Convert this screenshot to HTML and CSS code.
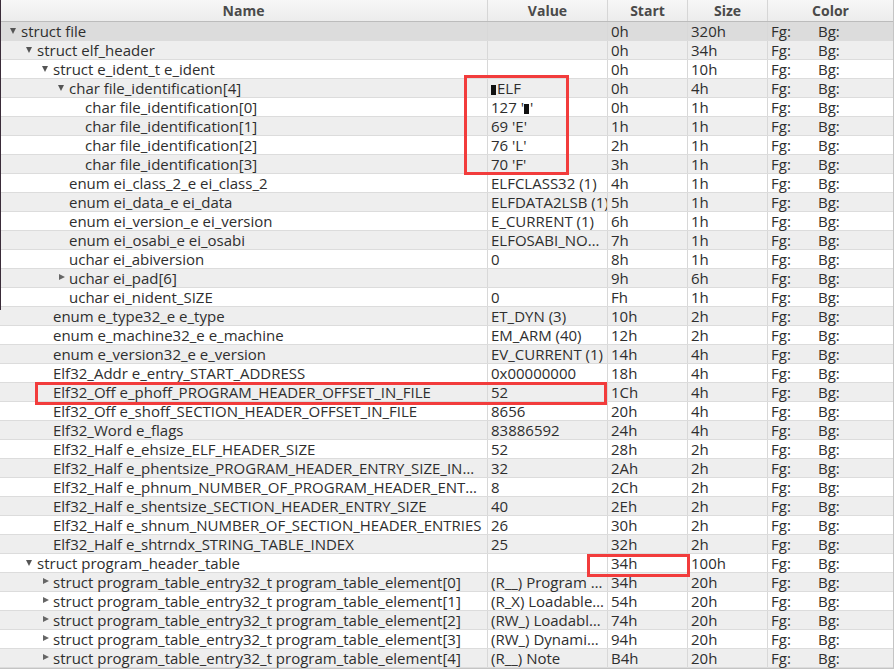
FILE: index.html
```html
<!DOCTYPE html>
<html>
<head>
<meta charset="utf-8">
<link rel="stylesheet" href="styles.css">
</head>
<body>
<div class="tree">
  <div class="head">
    <div class="h">Name</div>
    <div class="h">Value</div>
    <div class="h">Start</div>
    <div class="h">Size</div>
    <div class="h">Color</div>
  </div>

  <div class="row sel"><div class="c name d0"><span class="tw open"></span>struct file</div><div class="c val"></div><div class="c num">0h</div><div class="c num">320h</div><div class="c col"><span class="fg">Fg:</span><span>Bg:</span></div></div>
  <div class="row alt"><div class="c name d1"><span class="tw open"></span>struct elf_header</div><div class="c val"></div><div class="c num">0h</div><div class="c num">34h</div><div class="c col"><span class="fg">Fg:</span><span>Bg:</span></div></div>
  <div class="row"><div class="c name d2"><span class="tw open"></span>struct e_ident_t e_ident</div><div class="c val"></div><div class="c num">0h</div><div class="c num">10h</div><div class="c col"><span class="fg">Fg:</span><span>Bg:</span></div></div>
  <div class="row alt"><div class="c name d3"><span class="tw open"></span>char file_identification[4]</div><div class="c val"><span class="blk"></span>ELF</div><div class="c num">0h</div><div class="c num">4h</div><div class="c col"><span class="fg">Fg:</span><span>Bg:</span></div></div>
  <div class="row"><div class="c name d4"><span class="tw"></span>char file_identification[0]</div><div class="c val">127 '<span class="blk"></span>'</div><div class="c num">0h</div><div class="c num">1h</div><div class="c col"><span class="fg">Fg:</span><span>Bg:</span></div></div>
  <div class="row alt"><div class="c name d4"><span class="tw"></span>char file_identification[1]</div><div class="c val">69 'E'</div><div class="c num">1h</div><div class="c num">1h</div><div class="c col"><span class="fg">Fg:</span><span>Bg:</span></div></div>
  <div class="row"><div class="c name d4"><span class="tw"></span>char file_identification[2]</div><div class="c val">76 'L'</div><div class="c num">2h</div><div class="c num">1h</div><div class="c col"><span class="fg">Fg:</span><span>Bg:</span></div></div>
  <div class="row alt"><div class="c name d4"><span class="tw"></span>char file_identification[3]</div><div class="c val">70 'F'</div><div class="c num">3h</div><div class="c num">1h</div><div class="c col"><span class="fg">Fg:</span><span>Bg:</span></div></div>
  <div class="row"><div class="c name d3"><span class="tw"></span>enum ei_class_2_e ei_class_2</div><div class="c val">ELFCLASS32 (1)</div><div class="c num">4h</div><div class="c num">1h</div><div class="c col"><span class="fg">Fg:</span><span>Bg:</span></div></div>
  <div class="row alt"><div class="c name d3"><span class="tw"></span>enum ei_data_e ei_data</div><div class="c val">ELFDATA2LSB (1)</div><div class="c num">5h</div><div class="c num">1h</div><div class="c col"><span class="fg">Fg:</span><span>Bg:</span></div></div>
  <div class="row"><div class="c name d3"><span class="tw"></span>enum ei_version_e ei_version</div><div class="c val">E_CURRENT (1)</div><div class="c num">6h</div><div class="c num">1h</div><div class="c col"><span class="fg">Fg:</span><span>Bg:</span></div></div>
  <div class="row alt"><div class="c name d3"><span class="tw"></span>enum ei_osabi_e ei_osabi</div><div class="c val">ELFOSABI_NO…</div><div class="c num">7h</div><div class="c num">1h</div><div class="c col"><span class="fg">Fg:</span><span>Bg:</span></div></div>
  <div class="row"><div class="c name d3"><span class="tw"></span>uchar ei_abiversion</div><div class="c val">0</div><div class="c num">8h</div><div class="c num">1h</div><div class="c col"><span class="fg">Fg:</span><span>Bg:</span></div></div>
  <div class="row alt"><div class="c name d3"><span class="tw closed"></span>uchar ei_pad[6]</div><div class="c val"></div><div class="c num">9h</div><div class="c num">6h</div><div class="c col"><span class="fg">Fg:</span><span>Bg:</span></div></div>
  <div class="row"><div class="c name d3"><span class="tw"></span>uchar ei_nident_SIZE</div><div class="c val">0</div><div class="c num">Fh</div><div class="c num">1h</div><div class="c col"><span class="fg">Fg:</span><span>Bg:</span></div></div>
  <div class="row alt"><div class="c name d2"><span class="tw"></span>enum e_type32_e e_type</div><div class="c val">ET_DYN (3)</div><div class="c num">10h</div><div class="c num">2h</div><div class="c col"><span class="fg">Fg:</span><span>Bg:</span></div></div>
  <div class="row"><div class="c name d2"><span class="tw"></span>enum e_machine32_e e_machine</div><div class="c val">EM_ARM (40)</div><div class="c num">12h</div><div class="c num">2h</div><div class="c col"><span class="fg">Fg:</span><span>Bg:</span></div></div>
  <div class="row alt"><div class="c name d2"><span class="tw"></span>enum e_version32_e e_version</div><div class="c val">EV_CURRENT (1)</div><div class="c num">14h</div><div class="c num">4h</div><div class="c col"><span class="fg">Fg:</span><span>Bg:</span></div></div>
  <div class="row"><div class="c name d2"><span class="tw"></span>Elf32_Addr e_entry_START_ADDRESS</div><div class="c val">0x00000000</div><div class="c num">18h</div><div class="c num">4h</div><div class="c col"><span class="fg">Fg:</span><span>Bg:</span></div></div>
  <div class="row alt"><div class="c name d2"><span class="tw"></span>Elf32_Off e_phoff_PROGRAM_HEADER_OFFSET_IN_FILE</div><div class="c val">52</div><div class="c num">1Ch</div><div class="c num">4h</div><div class="c col"><span class="fg">Fg:</span><span>Bg:</span></div></div>
  <div class="row"><div class="c name d2"><span class="tw"></span>Elf32_Off e_shoff_SECTION_HEADER_OFFSET_IN_FILE</div><div class="c val">8656</div><div class="c num">20h</div><div class="c num">4h</div><div class="c col"><span class="fg">Fg:</span><span>Bg:</span></div></div>
  <div class="row alt"><div class="c name d2"><span class="tw"></span>Elf32_Word e_flags</div><div class="c val">83886592</div><div class="c num">24h</div><div class="c num">4h</div><div class="c col"><span class="fg">Fg:</span><span>Bg:</span></div></div>
  <div class="row"><div class="c name d2"><span class="tw"></span>Elf32_Half e_ehsize_ELF_HEADER_SIZE</div><div class="c val">52</div><div class="c num">28h</div><div class="c num">2h</div><div class="c col"><span class="fg">Fg:</span><span>Bg:</span></div></div>
  <div class="row alt"><div class="c name d2"><span class="tw"></span>Elf32_Half e_phentsize_PROGRAM_HEADER_ENTRY_SIZE_IN…</div><div class="c val">32</div><div class="c num">2Ah</div><div class="c num">2h</div><div class="c col"><span class="fg">Fg:</span><span>Bg:</span></div></div>
  <div class="row"><div class="c name d2"><span class="tw"></span>Elf32_Half e_phnum_NUMBER_OF_PROGRAM_HEADER_ENT…</div><div class="c val">8</div><div class="c num">2Ch</div><div class="c num">2h</div><div class="c col"><span class="fg">Fg:</span><span>Bg:</span></div></div>
  <div class="row alt"><div class="c name d2"><span class="tw"></span>Elf32_Half e_shentsize_SECTION_HEADER_ENTRY_SIZE</div><div class="c val">40</div><div class="c num">2Eh</div><div class="c num">2h</div><div class="c col"><span class="fg">Fg:</span><span>Bg:</span></div></div>
  <div class="row"><div class="c name d2"><span class="tw"></span>Elf32_Half e_shnum_NUMBER_OF_SECTION_HEADER_ENTRIES</div><div class="c val">26</div><div class="c num">30h</div><div class="c num">2h</div><div class="c col"><span class="fg">Fg:</span><span>Bg:</span></div></div>
  <div class="row alt"><div class="c name d2"><span class="tw"></span>Elf32_Half e_shtrndx_STRING_TABLE_INDEX</div><div class="c val">25</div><div class="c num">32h</div><div class="c num">2h</div><div class="c col"><span class="fg">Fg:</span><span>Bg:</span></div></div>
  <div class="row"><div class="c name d1"><span class="tw open"></span>struct program_header_table</div><div class="c val"></div><div class="c num">34h</div><div class="c num">100h</div><div class="c col"><span class="fg">Fg:</span><span>Bg:</span></div></div>
  <div class="row alt"><div class="c name d2"><span class="tw closed"></span>struct program_table_entry32_t program_table_element[0]</div><div class="c val">(R__) Program …</div><div class="c num">34h</div><div class="c num">20h</div><div class="c col"><span class="fg">Fg:</span><span>Bg:</span></div></div>
  <div class="row"><div class="c name d2"><span class="tw closed"></span>struct program_table_entry32_t program_table_element[1]</div><div class="c val">(R_X) Loadable…</div><div class="c num">54h</div><div class="c num">20h</div><div class="c col"><span class="fg">Fg:</span><span>Bg:</span></div></div>
  <div class="row alt"><div class="c name d2"><span class="tw closed"></span>struct program_table_entry32_t program_table_element[2]</div><div class="c val">(RW_) Loadabl…</div><div class="c num">74h</div><div class="c num">20h</div><div class="c col"><span class="fg">Fg:</span><span>Bg:</span></div></div>
  <div class="row"><div class="c name d2"><span class="tw closed"></span>struct program_table_entry32_t program_table_element[3]</div><div class="c val">(RW_) Dynami…</div><div class="c num">94h</div><div class="c num">20h</div><div class="c col"><span class="fg">Fg:</span><span>Bg:</span></div></div>
  <div class="row alt"><div class="c name d2"><span class="tw closed"></span>struct program_table_entry32_t program_table_element[4]</div><div class="c val">(R__) Note</div><div class="c num">B4h</div><div class="c num">20h</div><div class="c col"><span class="fg">Fg:</span><span>Bg:</span></div></div>

  <div class="edge"></div>
  <div class="mark m1"></div>
  <div class="mark m2"></div>
  <div class="mark m3"></div>
</div>
</body>
</html>
```
FILE: styles.css
```css
html, body {
  margin: 0;
  padding: 0;
  background: #ffffff;
}
.tree {
  position: relative;
  width: 894px;
  height: 669px;
  box-sizing: border-box;
  border-right: 1px solid #c4c4c4;
  border-bottom: 1px solid #c4c4c4;
  overflow: hidden;
  font-family: "Open Sans", "Noto Sans", sans-serif;
  font-size: 15px;
  color: #2e2e2e;
}
.head, .row {
  display: grid;
  grid-template-columns: 488px 120px 80px 80px 1fr;
}
.head {
  height: 22px;
  box-sizing: border-box;
  border-bottom: 1px solid #bcbcbc;
  background: linear-gradient(#f7f7f7, #ececec);
}
.h {
  border-right: 1px solid #d6d6d6;
  text-align: center;
  font-weight: bold;
  font-size: 14px;
  color: #4a4a4a;
  line-height: 21px;
}
.h:last-child { border-right: none; }
.row {
  height: 19px;
  box-sizing: border-box;
  border-bottom: 1px solid #dcdcdc;
  background: #ffffff;
}
.row.alt { background: #eeeeee; }
.row.sel { background: #dcdcdc; }
.c {
  border-right: 1px solid #d8d8d8;
  height: 18px;
  line-height: 19px;
  white-space: nowrap;
  overflow-x: clip;
  overflow-y: visible;
  padding-left: 3px;
}
.c:last-child { border-right: none; }
.name { display: flex; }
.d0 { padding-left: 5px; }
.d1 { padding-left: 21px; }
.d2 { padding-left: 37px; }
.d3 { padding-left: 53px; }
.d4 { padding-left: 69px; }
.tw {
  flex: none;
  width: 16px;
  height: 18px;
  position: relative;
}
.tw.open::before {
  content: "";
  position: absolute;
  left: 5px;
  top: 6px;
  border-left: 3.5px solid transparent;
  border-right: 3.5px solid transparent;
  border-top: 6px solid #555555;
}
.tw.closed::before {
  content: "";
  position: absolute;
  left: 6px;
  top: 5px;
  border-top: 3.5px solid transparent;
  border-bottom: 3.5px solid transparent;
  border-left: 6px solid #666666;
}
.col .fg {
  display: inline-block;
  width: 47px;
}
.blk {
  display: inline-block;
  width: 5px;
  height: 10px;
  background: #111111;
  margin: 0 1px 0 0;
  vertical-align: -1px;
}
.edge {
  position: absolute;
  left: 0;
  top: 0;
  width: 1px;
  height: 310px;
  background: #3a2c39;
}
.mark {
  position: absolute;
  border: 3px solid #f23c3c;
  box-sizing: border-box;
}
.m1 { left: 464px; top: 75px; width: 105px; height: 100px; }
.m2 { left: 35px; top: 382px; width: 572px; height: 23px; }
.m3 { left: 587px; top: 554px; width: 103px; height: 23px; }
```
